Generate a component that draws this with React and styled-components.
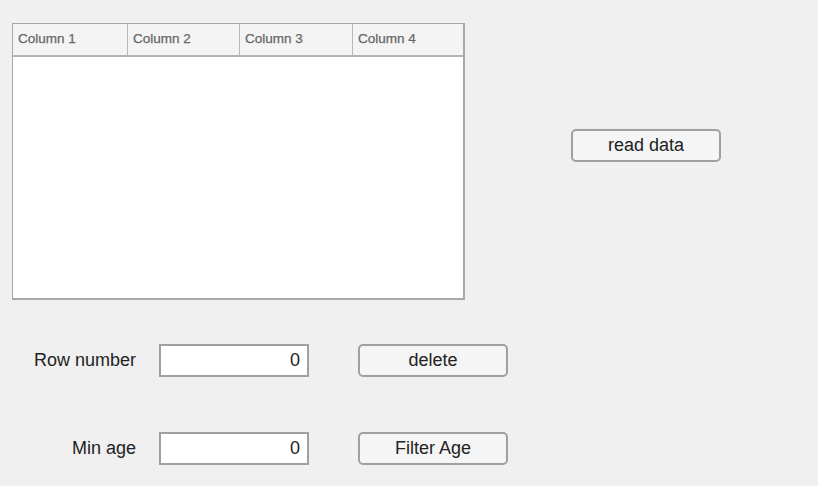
import React from 'react';
import styled, { createGlobalStyle } from 'styled-components';

const GlobalStyle = createGlobalStyle`
  html, body {
    margin: 0;
    padding: 0;
    background: #f0f0f0;
    font-family: "Liberation Sans", Arial, sans-serif;
  }
`;

const Page = styled.div`
  width: 818px;
  height: 486px;
  box-sizing: border-box;
  padding: 23px 0 0 12px;
  background: #f0f0f0;
`;

const TopRow = styled.div`
  display: flex;
  align-items: flex-start;
  gap: 106px;
`;

const Table = styled.div`
  width: 453px;
  height: 277px;
  box-sizing: border-box;
  border: 2px solid #a8a8a8;
  border-top-width: 1px;
  border-left-width: 1px;
  background: #ffffff;
`;

const HeaderRow = styled.div`
  display: grid;
  grid-template-columns: 114px 112px 113px 1fr;
  height: 33px;
  background: #f4f4f4;
  border-bottom: 2px solid #b4b4b4;
  box-sizing: border-box;
`;

const HeaderCell = styled.div`
  display: flex;
  align-items: center;
  padding-left: 5px;
  padding-bottom: 2px;
  font-size: 13.5px;
  font-weight: 400;
  color: #666;
  -webkit-text-stroke: 0.25px #666;
  border-left: ${(p) => (p.$first ? 'none' : '1px solid #b8b8b8')};
`;

const Button = styled.button`
  width: 150px;
  height: 33px;
  box-sizing: border-box;
  border: 2px solid #a0a0a0;
  border-radius: 5px;
  background: #f5f5f5;
  color: #222;
  font-family: "Liberation Sans", Arial, sans-serif;
  font-size: 18px;
  padding: 0;
  cursor: pointer;
`;

const ButtonSlot = styled.div`
  margin-top: 106px;
`;

const Form = styled.div`
  display: flex;
  flex-direction: column;
  gap: 55px;
  margin-top: 44px;
`;

const FormRow = styled.div`
  display: grid;
  grid-template-columns: 124px 150px 150px;
  column-gap: 23px;
  align-items: center;

  & > button {
    margin-left: 26px;
  }
`;

const Label = styled.label`
  text-align: right;
  font-size: 18px;
  color: #222;
  padding-bottom: 1px;
`;

const NumberField = styled.input`
  width: 150px;
  height: 33px;
  box-sizing: border-box;
  border: 2px solid #a0a0a0;
  background: #fff;
  text-align: right;
  padding: 0 7px 1px 0;
  font-family: "Liberation Sans", Arial, sans-serif;
  font-size: 18px;
  color: #222;
  outline: none;
`;

const columns = ['Column 1', 'Column 2', 'Column 3', 'Column 4'];

export default function App() {
  return (
    <Page>
      <GlobalStyle />
      <TopRow>
        <Table>
          <HeaderRow>
            {columns.map((c, i) => (
              <HeaderCell key={c} $first={i === 0}>
                {c}
              </HeaderCell>
            ))}
          </HeaderRow>
        </Table>
        <ButtonSlot>
          <Button>read data</Button>
        </ButtonSlot>
      </TopRow>
      <Form>
        <FormRow>
          <Label>Row number</Label>
          <NumberField defaultValue="0" />
          <Button>delete</Button>
        </FormRow>
        <FormRow>
          <Label>Min age</Label>
          <NumberField defaultValue="0" />
          <Button>Filter Age</Button>
        </FormRow>
      </Form>
    </Page>
  );
}
